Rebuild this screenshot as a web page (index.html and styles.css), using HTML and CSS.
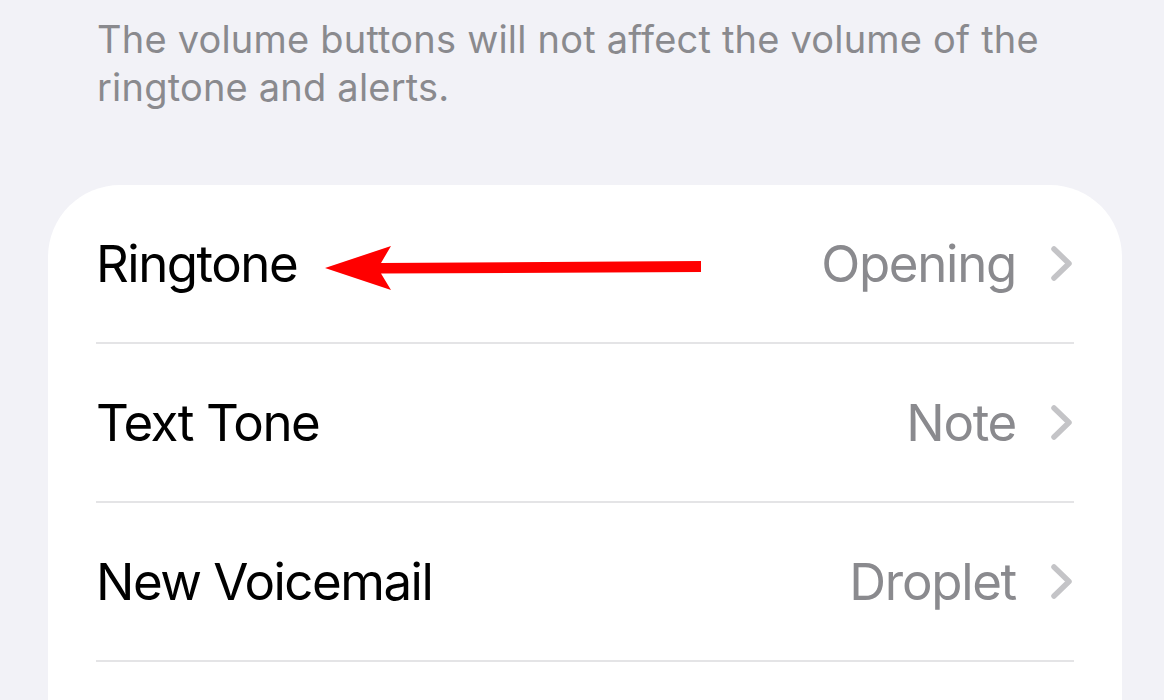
FILE: index.html
```html
<!DOCTYPE html>
<html lang="en">
<head>
    <meta charset="UTF-8">
    <meta name="viewport" content="width=device-width, initial-scale=1.0">
    <title>Sounds &amp; Haptics</title>
    <link rel="stylesheet" href="styles.css">
</head>
<body>
    <p class="footer-note">The volume buttons will not affect the volume of the ringtone and alerts.</p>

    <div class="card">
        <div class="row">
            <div class="row-inner">
                <span class="label">Ringtone</span>
                <span class="value">Opening</span>
                <svg class="chevron" width="21" height="35" viewBox="0 0 21 35"><path d="M3 3 L18 17.5 L3 32" /></svg>
            </div>
            <!-- annotation arrow drawn over the row -->
            <svg class="arrow" width="400" height="50" viewBox="0 0 400 50">
                <polygon points="0,23 66,1 56,18 376,16 376,27 56,28.5 66,45" />
            </svg>
        </div>
        <div class="row">
            <div class="row-inner">
                <span class="label">Text Tone</span>
                <span class="value">Note</span>
                <svg class="chevron" width="21" height="35" viewBox="0 0 21 35"><path d="M3 3 L18 17.5 L3 32" /></svg>
            </div>
        </div>
        <div class="row">
            <div class="row-inner">
                <span class="label">New Voicemail</span>
                <span class="value">Droplet</span>
                <svg class="chevron" width="21" height="35" viewBox="0 0 21 35"><path d="M3 3 L18 17.5 L3 32" /></svg>
            </div>
        </div>
    </div>
</body>
</html>
```

FILE: styles.css
```css
body {
    margin: 0;
    background-color: #f2f2f7;
    font-family: Inter, 'Noto Sans', sans-serif;
    overflow: hidden;
}

.footer-note {
    margin: 0;
    padding: 15px 90px 0 97px;
    font-size: 38px;
    line-height: 48px;
    color: #8a8a8e;
    letter-spacing: 0.2px;
}

.card {
    margin: 74px 42px 0 48px;
    background-color: #fff;
    border-radius: 72px 72px 0 0;
    padding-left: 48px;
    padding-bottom: 80px;
}

.row {
    position: relative;
    padding-right: 48px;
}

.row-inner {
    display: flex;
    align-items: center;
    height: 157px;
    border-bottom: 2px solid #e4e4e6;
}

.label {
    flex: 1;
    font-size: 51px;
    color: #000;
    letter-spacing: -1.5px;
}

.value {
    font-size: 51px;
    color: #8a8a8e;
    letter-spacing: -1.3px;
    margin-right: 35px;
}

.chevron {
    margin-right: 2px;
}

.chevron path {
    fill: none;
    stroke: #c4c4c7;
    stroke-width: 5.5;
    stroke-linecap: round;
    stroke-linejoin: round;
}

.arrow {
    position: absolute;
    left: 229px;
    top: 60px;
}

.arrow polygon {
    fill: #ff0000;
}
```
